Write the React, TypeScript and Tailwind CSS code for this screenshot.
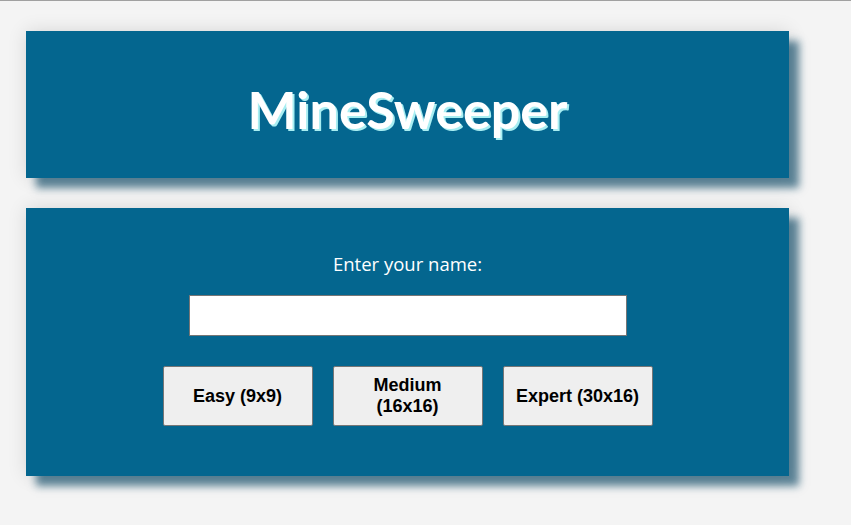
import React from 'react';

const levels = ['Easy (9x9)', 'Medium (16x16)', 'Expert (30x16)'];

const App = () => (
  <div className="min-h-[525px] bg-[#f4f4f4] border-t border-[#a0a0a0] pt-[30px] pl-[26px]">
    <div className="w-[763px] h-[147px] bg-[#04668f] flex items-center justify-center pt-[8px] shadow-[10px_10px_8px_rgba(10,70,100,0.65),0_0_18px_rgba(0,0,0,0.12)]">
      <h1
        className="text-white font-bold text-[52px] leading-[60px] [text-shadow:2px_2px_0_#a8eef2]"
        style={{ fontFamily: 'Lato, "Open Sans", sans-serif' }}
      >
        MineSweeper
      </h1>
    </div>
    <div className="mt-[30px] w-[763px] h-[268px] bg-[#04668f] flex flex-col items-center pt-[44px] shadow-[10px_10px_8px_rgba(10,70,100,0.65),0_0_18px_rgba(0,0,0,0.12)]">
      <label
        className="text-white text-[18.5px] leading-[24px]"
        style={{ fontFamily: '"Open Sans", sans-serif' }}
      >
        Enter your name:
      </label>
      <input
        type="text"
        className="mt-[19px] w-[438px] h-[41px] bg-white border border-[#767676] outline-none px-2"
      />
      <div className="mt-[30px] flex gap-[20px]">
        {levels.map((level) => (
          <button
            key={level}
            className="w-[150px] h-[60px] bg-[#efefef] border border-[#767676] rounded-[2px] text-black font-bold text-[18px] leading-[21px] px-[12px]"
            style={{ fontFamily: '"Liberation Sans", Arial, sans-serif' }}
          >
            {level}
          </button>
        ))}
      </div>
    </div>
  </div>
);

export default App;
